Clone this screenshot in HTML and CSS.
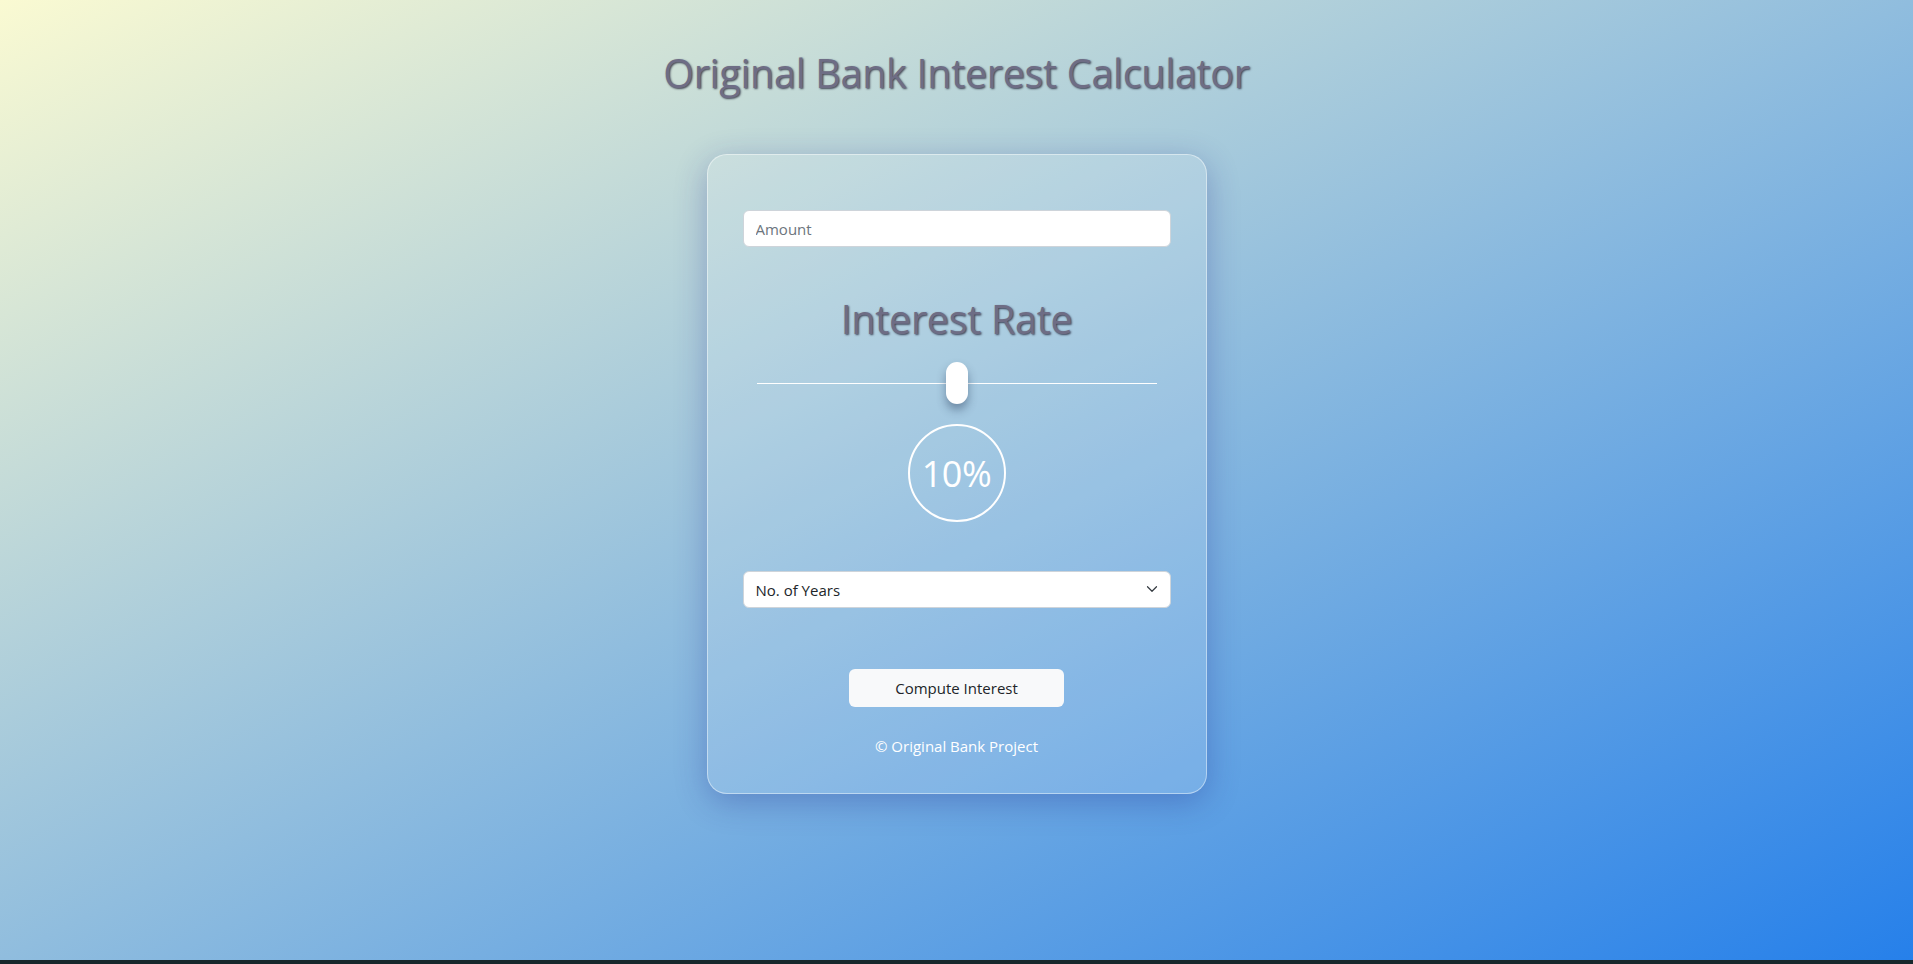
FILE: index.html
```html
<!DOCTYPE html>
<html lang="en">
<head>
<meta charset="utf-8">
<title>Original Bank Interest Calculator</title>
<link rel="stylesheet" href="styles.css">
</head>
<body>
<main class="page">
  <h1 class="title">Original Bank Interest Calculator</h1>
  <section class="card">
    <input class="field" type="text" placeholder="Amount">
    <h2 class="rate-title">Interest Rate</h2>
    <input class="slider" type="range" min="0" max="20" value="10">
    <div class="rate-circle">10%</div>
    <div class="select-wrap">
      <select class="field select">
        <option>No. of Years</option>
      </select>
      <svg class="chevron" width="16" height="16" viewBox="0 0 16 16"><path d="M2 5l6 6 6-6" fill="none" stroke="#343a40" stroke-width="1.6" stroke-linecap="round" stroke-linejoin="round"/></svg>
    </div>
    <button class="btn" type="button">Compute Interest</button>
    <p class="footer">© Original Bank Project</p>
  </section>
</main>
</body>
</html>
```
FILE: styles.css
```css
html {
  margin: 0;
  background: #17282c;
}
body {
  margin: 0;
  height: 960px;
  background: linear-gradient(to bottom right, #fafad2, #2680ea);
  font-family: "Open Sans", "Noto Sans", sans-serif;
  overflow: hidden;
}
.page {
  display: flex;
  flex-direction: column;
  align-items: center;
}
.title {
  margin: 45px 0 0;
  font-size: 39.5px;
  font-weight: 400;
  line-height: 56px;
  color: #6e6d85;
  text-shadow: 1px 1px 2px rgba(30, 30, 50, 0.8);
  letter-spacing: -0.3px;
}
.card {
  margin-top: 53px;
  width: 428px;
  height: 583px;
  padding: 55px 35px 0;
  border-radius: 20px;
  border: 1px solid rgba(255, 255, 255, 0.45);
  background: rgba(255, 255, 255, 0.14);
  box-shadow: 0 8px 32px rgba(31, 38, 135, 0.3);
  display: flex;
  flex-direction: column;
  align-items: center;
}
.field {
  box-sizing: border-box;
  width: 100%;
  height: 37px;
  padding: 6px 12px;
  border: 1px solid #ced4da;
  border-radius: 6px;
  background: #fff;
  font-family: inherit;
  font-size: 15px;
  color: #212529;
  outline: none;
}
.field::placeholder {
  color: #6c757d;
}
.rate-title {
  margin: 46px 0 0;
  font-size: 39.5px;
  font-weight: 400;
  line-height: 52px;
  color: #6e6d85;
  text-shadow: 1px 1px 2px rgba(30, 30, 50, 0.8);
  letter-spacing: -0.3px;
}
.slider {
  -webkit-appearance: none;
  appearance: none;
  width: 400px;
  height: 44px;
  margin: 16px 0 0;
  background: transparent;
}
.slider::-webkit-slider-runnable-track {
  height: 1px;
  background: #fff;
}
.slider::-webkit-slider-thumb {
  -webkit-appearance: none;
  width: 22px;
  height: 42px;
  margin-top: -21px;
  border-radius: 11px;
  background: #fff;
  box-shadow: 0 6px 10px rgba(40, 60, 90, 0.45);
}
.rate-circle {
  box-sizing: border-box;
  margin-top: 19px;
  width: 98px;
  height: 98px;
  border: 2px solid #fff;
  border-radius: 50%;
  display: flex;
  align-items: center;
  justify-content: center;
  color: #fff;
  font-size: 36px;
  letter-spacing: -0.5px;
}
.select-wrap {
  position: relative;
  width: 100%;
  margin-top: 49px;
}
.select {
  -webkit-appearance: none;
  appearance: none;
  display: block;
}
.chevron {
  position: absolute;
  right: 13px;
  top: 12px;
  width: 12px;
  height: 12px;
}
.btn {
  margin-top: 61px;
  width: 215px;
  height: 38px;
  border: none;
  border-radius: 6px;
  background: #f8f9fa;
  font-family: inherit;
  font-size: 15px;
  color: #212529;
}
.footer {
  margin: 29px 0 0;
  font-size: 15px;
  color: #fff;
}
```
